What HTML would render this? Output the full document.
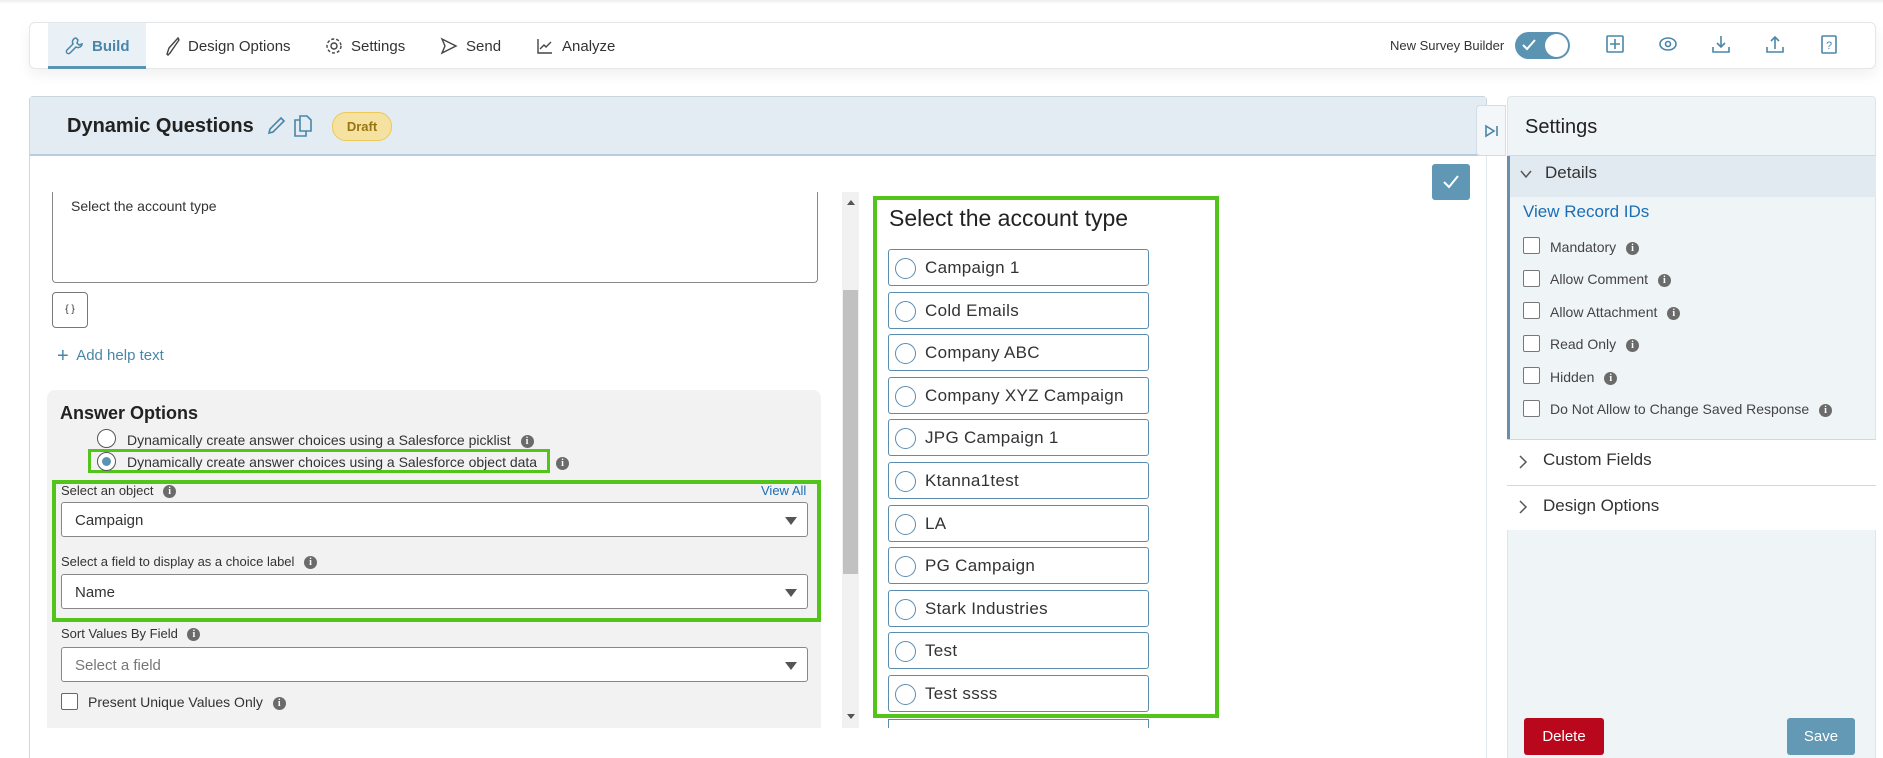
<!DOCTYPE html>
<html style="width:1883px;height:758px;overflow:hidden"><head><meta charset="utf-8"><style>
*{box-sizing:border-box;margin:0;padding:0}
body{width:1883px;height:758px;overflow:hidden;background:#fff;font-family:"Liberation Sans",sans-serif;color:#333;position:relative}
.abs{position:absolute}
.tb{left:29px;top:22px;width:1847px;height:47px;border:1px solid #e4e6ea;border-radius:6px;background:#fff;box-shadow:0 6px 14px rgba(0,0,0,.06)}
.tab{position:absolute;top:0;height:46px;display:flex;align-items:center;font-size:15px;color:#333}
.tab svg{margin-right:8px}
.ico{position:absolute;top:34px}
.main{left:29px;top:96px;width:1458px;height:662px;border:1px solid #c9d7e1;border-bottom:none;border-radius:4px 4px 0 0;background:#fff}
.hdr{left:0;top:0;width:100%;height:59px;background:#e3ecf2;border-bottom:2px solid #b5cddc}
.sel{position:absolute;left:61px;width:747px;height:35px;border:1px solid #888;border-radius:3px;background:#fff;font-size:15px;padding:9px 13px}
.sel:after{content:"";position:absolute;right:10px;top:14px;border-left:6px solid transparent;border-right:6px solid transparent;border-top:8px solid #555}
.info{display:inline-block;width:13px;height:13px;border-radius:50%;background:#6b6b6b;color:#fff;font-size:10px;font-weight:bold;text-align:center;line-height:13px;vertical-align:middle;margin-left:6px;font-family:"Liberation Serif",serif}
.lbl{position:absolute;font-size:13px;color:#333}
.opt{position:absolute;left:888px;width:261px;height:37px;border:1px solid #5b8db0;border-radius:3px;background:#fff;font-size:17px;color:#333;padding:8px 0 0 36px;letter-spacing:.3px}
.opt:before{content:"";position:absolute;left:6px;top:8px;width:19px;height:19px;border:1px solid #5b8db0;border-radius:50%}
.cb{position:absolute;left:1523px;width:17px;height:17px;border:1px solid #777;border-radius:2px;background:#fff}
.ct{position:absolute;left:1550px;font-size:14px;color:#444}
</style></head><body>
<div class="abs" style="left:0;top:0;width:1883px;height:4px;background:linear-gradient(#eee,#fff)"></div>
<div class="abs tb">
 <div class="abs" style="left:18px;top:0;width:98px;height:46px;background:#eaf1f6;border-bottom:3px solid #5b93b3"></div>
 <div class="tab" style="left:34px;color:#4a86a8;font-weight:bold"><svg width="20" height="20" viewBox="0 0 20 20" fill="none" stroke="#4a86a8" stroke-width="1.5"><path d="M12 2a4 4 0 0 0-3 6L3 14a2 2 0 0 0 3 3l6-6a4 4 0 0 0 6-3l-3 1-2-2 1-3z"/></svg>Build</div>
 <div class="tab" style="left:132px"><svg width="18" height="20" viewBox="0 0 18 20" fill="none" stroke="#444" stroke-width="1.4"><path d="M16 2L7 12l-2 6 1 1 2-2 9-13z"/></svg>Design Options</div>
 <div class="tab" style="left:295px"><svg width="18" height="18" viewBox="0 0 18 18" fill="none" stroke="#444" stroke-width="1.4"><circle cx="9" cy="9" r="3"/><circle cx="9" cy="9" r="7" stroke-dasharray="3 2"/></svg>Settings</div>
 <div class="tab" style="left:410px"><svg width="18" height="18" viewBox="0 0 18 18" fill="none" stroke="#444" stroke-width="1.4"><path d="M2 2l14 7-14 7 3-7z"/></svg>Send</div>
 <div class="tab" style="left:506px"><svg width="18" height="18" viewBox="0 0 18 18" fill="none" stroke="#444" stroke-width="1.4"><path d="M2 2v14h14M4 12l4-4 2 2 5-5"/></svg>Analyze</div>
 <div class="abs" style="left:1360px;top:15px;font-size:13px;color:#333">New Survey Builder</div>
 <div class="abs" style="left:1485px;top:9px;width:55px;height:27px;border-radius:14px;background:#5b93b3"><div class="abs" style="right:2px;top:2px;width:23px;height:23px;border-radius:50%;background:#fff"></div><svg class="abs" style="left:6px;top:6px" width="16" height="14"><path d="M2 7l4 4 8-9" stroke="#fff" stroke-width="2" fill="none"/></svg></div>
</div>
<svg class="ico" style="left:1605px" width="20" height="20" fill="none" stroke="#4a86a8" stroke-width="1.6"><rect x="2" y="2" width="16" height="16" rx="1"/><path d="M10 5v10M5 10h10"/></svg>
<svg class="ico" style="left:1658px" width="20" height="20" fill="none" stroke="#4a86a8" stroke-width="1.6"><ellipse cx="10" cy="10" rx="8" ry="6"/><circle cx="10" cy="10" r="2.5"/></svg>
<svg class="ico" style="left:1711px" width="20" height="20" fill="none" stroke="#4a86a8" stroke-width="1.6"><path d="M10 2v11M6 9l4 4 4-4M2 13v5h16v-5"/></svg>
<svg class="ico" style="left:1765px" width="20" height="20" fill="none" stroke="#4a86a8" stroke-width="1.6"><path d="M10 15V3M6 7l4-4 4 4M2 13v5h16v-5"/></svg>
<svg class="ico" style="left:1819px" width="20" height="20" fill="none" stroke="#4a86a8" stroke-width="1.6"><rect x="3" y="2" width="14" height="17" rx="1"/><text x="10" y="15" font-size="11" fill="#4a86a8" stroke="none" text-anchor="middle" font-family="Liberation Sans">?</text></svg>

<div class="abs main">
 <div class="abs hdr"></div>
 <div class="abs" style="left:37px;top:18px;font-size:20px;font-weight:bold;color:#222">Dynamic Questions</div>
 <svg class="abs" style="left:236px;top:19px" width="20" height="20" fill="none" stroke="#4a86a8" stroke-width="1.6"><path d="M15 2l3 3-11 11-4 1 1-4z"/></svg>
 <svg class="abs" style="left:262px;top:17px" width="22" height="24" fill="none" stroke="#4a86a8" stroke-width="1.6"><path d="M8 2h7l4 4v11H8z"/><path d="M8 6H3v16h11v-5"/></svg>
 <div class="abs" style="left:302px;top:15px;width:60px;height:29px;border-radius:14px;background:#f5e2a0;border:1px solid #ecc95a;color:#9a7410;font-size:13px;font-weight:bold;text-align:center;line-height:27px">Draft</div>
 <div class="abs" style="left:1402px;top:67px;width:38px;height:36px;border-radius:3px;background:#5f97b5"><svg class="abs" style="left:11px;top:11px" width="16" height="14"><path d="M1 7l5 5 9-11" stroke="#fff" stroke-width="2" fill="none"/></svg></div>
</div>
<div class="abs" style="left:1476px;top:105px;width:30px;height:51px;background:#f4f7f9;border:1px solid #d4dde4;border-radius:4px 0 0 4px"><svg class="abs" style="left:7px;top:18px" width="16" height="14" fill="none" stroke="#4a86a8" stroke-width="1.6"><path d="M2 2l8 5-8 5zM13 2v10"/></svg></div>

<div class="abs" style="left:52px;top:192px;width:766px;height:91px;border:1px solid #888;border-top:none;border-radius:0 0 4px 4px;font-size:14px;padding:6px 18px">Select the account type</div>
<div class="abs" style="left:52px;top:292px;width:36px;height:36px;border:1px solid #777;border-radius:4px;font-size:10px;text-align:center;line-height:34px">{ }</div>
<div class="abs" style="left:57px;top:345px;font-size:15px;color:#4a86a8"><span style="font-size:20px;vertical-align:-2px">+</span>&nbsp; Add help text</div>

<div class="abs" style="left:47px;top:390px;width:774px;height:338px;background:#f2f2f2;border-radius:8px 8px 0 0"></div>
<div class="abs" style="left:60px;top:403px;font-size:18px;font-weight:bold;color:#222">Answer Options</div>
<div class="abs" style="left:97px;top:429px;width:19px;height:19px;border:1px solid #555;border-radius:50%;background:#fff"></div>
<div class="lbl" style="left:127px;top:432px;font-size:14px">Dynamically create answer choices using a Salesforce picklist <span class="info">i</span></div>
<div class="abs" style="left:88px;top:449px;width:462px;height:24px;border:3px solid #52c41a"></div>
<div class="abs" style="left:97px;top:452px;width:19px;height:19px;border:1px solid #555;border-radius:50%;background:#fff"><div class="abs" style="left:4px;top:4px;width:9px;height:9px;border-radius:50%;background:#5b93b3"></div></div>
<div class="lbl" style="left:127px;top:454px;font-size:14px">Dynamically create answer choices using a Salesforce object data</div>
<span class="info abs" style="left:550px;top:457px">i</span>
<div class="abs" style="left:52px;top:480px;width:769px;height:142px;border:4px solid #52c41a"></div>
<div class="lbl" style="left:61px;top:483px">Select an object <span class="info">i</span></div>
<div class="lbl" style="left:761px;top:483px;color:#1b6eb5">View All</div>
<div class="sel" style="top:502px">Campaign</div>
<div class="lbl" style="left:61px;top:554px">Select a field to display as a choice label <span class="info">i</span></div>
<div class="sel" style="top:574px">Name</div>
<div class="lbl" style="left:61px;top:626px">Sort Values By Field <span class="info">i</span></div>
<div class="sel" style="top:647px;color:#777">Select a field</div>
<div class="abs" style="left:61px;top:693px;width:17px;height:17px;border:1px solid #666;border-radius:2px;background:#fff"></div>
<div class="lbl" style="left:88px;top:694px;font-size:14px">Present Unique Values Only <span class="info">i</span></div>

<div class="abs" style="left:842px;top:192px;width:17px;height:536px;background:#f1f1f1"></div>
<div class="abs" style="left:843px;top:290px;width:15px;height:284px;background:#c1c1c1"></div>
<div class="abs" style="left:847px;top:200px;border-left:4px solid transparent;border-right:4px solid transparent;border-bottom:5px solid #555"></div>
<div class="abs" style="left:847px;top:714px;border-left:4px solid transparent;border-right:4px solid transparent;border-top:5px solid #555"></div>

<div class="abs" style="left:873px;top:196px;width:346px;height:522px;border:4px solid #52c41a"></div>
<div class="abs" style="left:889px;top:205px;font-size:23px;color:#222">Select the account type</div>
<div class="opt" style="top:249px">Campaign 1</div>
<div class="opt" style="top:292px">Cold Emails</div>
<div class="opt" style="top:334px">Company ABC</div>
<div class="opt" style="top:377px">Company XYZ Campaign</div>
<div class="opt" style="top:419px">JPG Campaign 1</div>
<div class="opt" style="top:462px">Ktanna1test</div>
<div class="opt" style="top:505px">LA</div>
<div class="opt" style="top:547px">PG Campaign</div>
<div class="opt" style="top:590px">Stark Industries</div>
<div class="opt" style="top:632px">Test</div>
<div class="opt" style="top:675px">Test ssss</div>
<div class="abs" style="left:888px;top:719px;width:261px;height:10px;border:1px solid #5b8db0;border-bottom:none"></div>
<div class="abs" style="left:31px;top:728px;width:1454px;height:30px;background:#fff"></div>
<div class="abs" style="left:1486px;top:156px;width:1px;height:602px;background:#e3e8ec"></div>

<div class="abs" style="left:1507px;top:96px;width:369px;height:662px;background:#eff4f7;border:1px solid #dde5ea;border-bottom:none;border-radius:4px 4px 0 0"></div>
<div class="abs" style="left:1525px;top:116px;font-size:20px;color:#222">Settings</div>
<div class="abs" style="left:1507px;top:155px;width:369px;height:1px;background:#cfd9e0"></div>
<div class="abs" style="left:1507px;top:156px;width:3px;height:284px;background:#6b8fa8"></div>
<div class="abs" style="left:1510px;top:156px;width:366px;height:41px;background:#e1eaf0"></div>
<svg class="abs" style="left:1519px;top:167px" width="14" height="14" fill="none" stroke="#555" stroke-width="1.5"><path d="M2 4l5 6 5-6"/></svg>
<div class="abs" style="left:1545px;top:163px;font-size:17px;color:#333">Details</div>
<div class="abs" style="left:1523px;top:202px;font-size:17px;color:#1b6eb5">View Record IDs</div>
<div class="cb" style="top:237px"></div><div class="ct" style="top:239px">Mandatory <span class="info">i</span></div>
<div class="cb" style="top:270px"></div><div class="ct" style="top:271px">Allow Comment <span class="info">i</span></div>
<div class="cb" style="top:302px"></div><div class="ct" style="top:304px">Allow Attachment <span class="info">i</span></div>
<div class="cb" style="top:335px"></div><div class="ct" style="top:336px">Read Only <span class="info">i</span></div>
<div class="cb" style="top:367px"></div><div class="ct" style="top:369px">Hidden <span class="info">i</span></div>
<div class="cb" style="top:400px"></div><div class="ct" style="top:401px">Do Not Allow to Change Saved Response <span class="info">i</span></div>
<div class="abs" style="left:1507px;top:439px;width:369px;height:91px;background:#fff;border-top:1px solid #d2d8dc"></div>
<div class="abs" style="left:1507px;top:485px;width:369px;height:1px;background:#d2d8dc"></div>
<svg class="abs" style="left:1517px;top:454px" width="12" height="16" fill="none" stroke="#555" stroke-width="1.5"><path d="M3 2l6 6-6 6"/></svg>
<div class="abs" style="left:1543px;top:450px;font-size:17px;color:#333">Custom Fields</div>
<svg class="abs" style="left:1517px;top:499px" width="12" height="16" fill="none" stroke="#555" stroke-width="1.5"><path d="M3 2l6 6-6 6"/></svg>
<div class="abs" style="left:1543px;top:496px;font-size:17px;color:#333">Design Options</div>
<div class="abs" style="left:1524px;top:718px;width:80px;height:37px;background:#b9081b;border-radius:3px;color:#fff;font-size:15px;text-align:center;line-height:37px">Delete</div>
<div class="abs" style="left:1787px;top:718px;width:68px;height:37px;background:#6399b5;border-radius:3px;color:#fff;font-size:15px;text-align:center;line-height:37px">Save</div>
</body></html>
